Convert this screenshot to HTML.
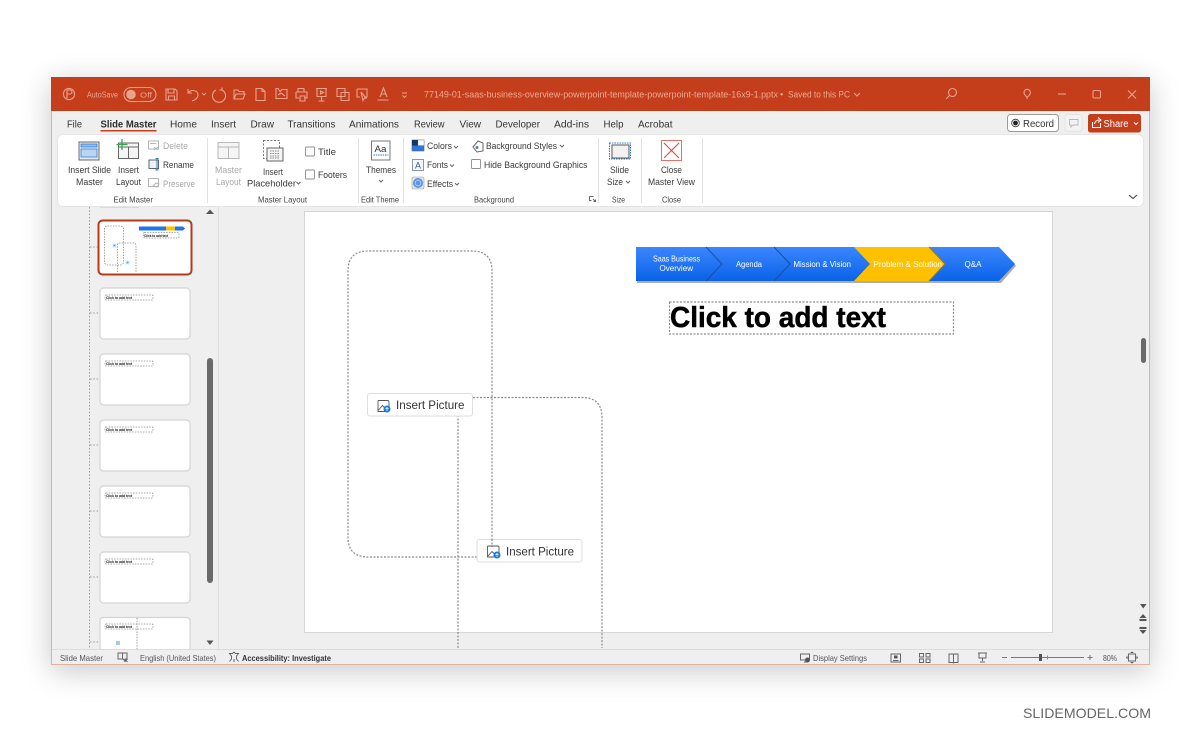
<!DOCTYPE html>
<html lang="en">
<head>
<meta charset="utf-8">
<title>Slide Master</title>
<style>
html,body{margin:0;padding:0;background:#fff;width:1200px;height:743px;overflow:hidden}
#win{position:absolute;left:51px;top:77px;width:1099px;height:588px;box-shadow:0 6px 28px rgba(0,0,0,.22)}
svg{position:absolute;left:0;top:0;filter:blur(.3px)}
text{font-family:"Liberation Sans",sans-serif;font-size:9.5px;fill:#3a3a3a}
.tab{font-size:10.5px;fill:#333}
.g{fill:#a8a8a8}
.grp{font-size:8.5px;fill:#444}
.nav{font-size:8px;fill:#fff}
.s{font-size:8.5px;fill:#555}
.ti{stroke:#eba28c;fill:none;stroke-width:1.1}
.ic{stroke:#666;fill:none;stroke-width:1}
.ig{stroke:#b5b5b5;fill:none;stroke-width:1}
.d{stroke:#8c8c8c;fill:none;stroke-width:1.2;stroke-dasharray:2 1.5}
.md{stroke:#8c8c8c;fill:none;stroke-width:.8;stroke-dasharray:1.5 1.2}
.th{fill:#fff;stroke:#d4d4d4;stroke-width:1.2}
.mt{font-size:3.6px;font-weight:bold;fill:#111}
.ck{fill:#fff;stroke:#8d8d8d;stroke-width:.9}
</style>
</head>
<body>
<div id="win"></div>
<svg width="1200" height="743" viewBox="0 0 1200 743" xmlns="http://www.w3.org/2000/svg">
<!-- window base -->
<rect x="51.5" y="77.5" width="1098" height="587" fill="#efefef" stroke="#e2b0a0"/>
<rect x="51" y="77" width="1099" height="34" fill="#c43e1c"/>

<!-- title bar icons -->
<circle cx="69" cy="94" r="5.6" class="ti" stroke-width="1.4"/><path d="M67 90v8M67 90h3a2 2 0 0 1 0 4h-3" class="ti"/>
<text x="87" y="97.5" style="font-size:8px;fill:#e9a591" textLength="31" lengthAdjust="spacingAndGlyphs">AutoSave</text>
<rect x="124" y="87.5" width="32" height="14" rx="7" fill="none" stroke="#eba28c" stroke-width="1.1"/>
<circle cx="131" cy="94.5" r="4.8" fill="#eba28c"/>
<text x="140" y="97.5" style="font-size:7.5px;fill:#e9a591" textLength="12" lengthAdjust="spacingAndGlyphs">Off</text>
<path d="M166 89h9l2 2v9h-11zM168 89v4h6v-4M168.500 100v-4h6v4" class="ti"/>
<path d="M188 89v4h4M188 93c3-4 10-3 10 2 0 3-3 5-6 6" class="ti"/>
<path d="M202 93l2 2 2-2" class="ti" stroke-width=".9"/>
<path d="M216 90a6.500 6.500 0 1 0 6 0M222 90v-2.500M222 90h-2.500" class="ti"/>
<path d="M234 99v-9h4l1 1.500h5v2M234 99l2-5h9l-2 5z" class="ti"/>
<path d="M256 88.500h6l3 3v9h-9zM262 88.500v3h3" class="ti"/>
<path d="M276 88.500v10h11v-9h-5l-2 2-2-3zM278 95l3-2 4 3" class="ti"/>
<path d="M298 92v-3.500h6V92M296 92h11v6h-3M296 92v6h3M300 96h5v5h-5z" class="ti"/>
<path d="M316 88.500h11M317 88.500v8h9v-8M321.500 96.500v4M318.500 101h6M320.500 91l3 1.500-3 1.500z" class="ti"/>
<path d="M337 88.500h8v8h-8z" class="ti" fill="#eba28c"/><rect x="341" y="92.500" width="8" height="8" fill="none" stroke="#eba28c"/>
<path d="M357 89h10v8h-3M357 89v8h3M361 92l5 6-2 .5-1 2z" class="ti"/>
<path d="M380 97l3.500-9 3.500 9M381.500 94h4M377.500 100h11" class="ti" stroke-width="1.200"/>
<path d="M402 93h5M402.500 95.500l2 2 2-2" class="ti" stroke-width=".8"/>

<text x="424" y="97.500" style="font-size:9px;fill:#eda994" textLength="354" lengthAdjust="spacingAndGlyphs">77149-01-saas-business-overview-powerpoint-template-powerpoint-template-16x9-1.pptx</text>
<text x="780" y="97.500" style="font-size:9px;fill:#eda994">•</text>
<text x="788" y="97.500" style="font-size:9px;fill:#eda994" textLength="62" lengthAdjust="spacingAndGlyphs">Saved to this PC</text>
<path d="M854 93l3 3 3-3" class="ti"/>
<circle cx="952.500" cy="92.500" r="4" class="ti"/><path d="M949.500 95.500l-3.500 3.500" class="ti"/>
<path d="M1027 99v-2c-1-1-3-2-3-4.500a3.200 3.200 0 0 1 6.400 0c0 2.500-2 3.500-3 4.500" class="ti"/>
<path d="M1058 94h8" class="ti"/>
<rect x="1093" y="90.500" width="7.500" height="7.500" rx="1.500" class="ti"/>
<path d="M1128 90.500l8 8M1136 90.500l-8 8" class="ti"/>

<!-- tabs -->
<text class="tab" x="67" y="127.500" textLength="15" lengthAdjust="spacingAndGlyphs">File</text>
<text class="tab" x="100.500" y="127.500" textLength="56" lengthAdjust="spacingAndGlyphs" style="font-weight:bold;font-size:10px;fill:#2c2c2c">Slide Master</text>
<rect x="100.500" y="130" width="56" height="1.500" fill="#c43e1c"/>
<text class="tab" x="170" y="127.500" textLength="27" lengthAdjust="spacingAndGlyphs">Home</text>
<text class="tab" x="211" y="127.500" textLength="25" lengthAdjust="spacingAndGlyphs">Insert</text>
<text class="tab" x="250.500" y="127.500" textLength="23.500" lengthAdjust="spacingAndGlyphs">Draw</text>
<text class="tab" x="287.500" y="127.500" textLength="48" lengthAdjust="spacingAndGlyphs">Transitions</text>
<text class="tab" x="349" y="127.500" textLength="50" lengthAdjust="spacingAndGlyphs">Animations</text>
<text class="tab" x="414" y="127.500" textLength="30.500" lengthAdjust="spacingAndGlyphs">Review</text>
<text class="tab" x="459.500" y="127.500" textLength="21.500" lengthAdjust="spacingAndGlyphs">View</text>
<text class="tab" x="495.500" y="127.500" textLength="44.500" lengthAdjust="spacingAndGlyphs">Developer</text>
<text class="tab" x="554" y="127.500" textLength="35" lengthAdjust="spacingAndGlyphs">Add-ins</text>
<text class="tab" x="603.500" y="127.500" textLength="20" lengthAdjust="spacingAndGlyphs">Help</text>
<text class="tab" x="638" y="127.500" textLength="34.500" lengthAdjust="spacingAndGlyphs">Acrobat</text>

<!-- record, comment, share -->
<rect x="1007.500" y="114.500" width="51" height="17" rx="3" fill="#fff" stroke="#9b9b9b"/>
<circle cx="1015.500" cy="123" r="3.800" fill="none" stroke="#333" stroke-width=".8"/><circle cx="1015.500" cy="123" r="2.400" fill="#222"/>
<text x="1023" y="126.800" style="font-size:10px;fill:#333" textLength="31" lengthAdjust="spacingAndGlyphs">Record</text>
<rect x="1065" y="114.500" width="17" height="17" rx="3" fill="#f3f3f3" stroke="#e4e4e4"/>
<path d="M1069.500 119.500h8.500v5.500h-5l-2 2v-2h-1.500z" fill="none" stroke="#b8b8b8" stroke-width=".9"/>
<rect x="1088" y="114" width="53" height="18.500" rx="2.500" fill="#c43e1c"/>
<path d="M1092.500 122v5.500h8V123M1094.500 124c.5-3 2.500-4 5-4M1098 117.500l3 2.500-3 2.500" fill="none" stroke="#fff" stroke-width="1"/>
<text x="1103.500" y="126.800" style="font-size:10px;fill:#fff" textLength="25" lengthAdjust="spacingAndGlyphs">Share</text>
<path d="M1134 122.500l2 2 2-2" fill="none" stroke="#fff" stroke-width="1"/>

<!-- left pane (under ribbon) -->
<rect x="52" y="207" width="166" height="443" fill="#efefef"/>
<rect x="100" y="206" width="39" height="2" fill="#dadada"/>

<!-- ribbon -->
<rect x="57.500" y="134.500" width="1086" height="72" rx="5" fill="#fff" stroke="#e6e6e6"/>
<g stroke="#e2e2e2" stroke-width="1">
<path d="M207.500 138v65M358.500 138v65M403.500 138v65M598.500 138v65M641.500 138v65M702.500 138v65"/>
</g>

<!-- insert slide master icon -->
<rect x="79" y="142" width="20" height="18" fill="#dfe9f4" stroke="#6d6d6d"/>
<rect x="81" y="144" width="16" height="3" fill="#8ebcec" stroke="#2a78d0" stroke-width=".7"/>
<rect x="81" y="149" width="16" height="8" fill="#b9d5f2" stroke="#2a78d0" stroke-width=".7"/>
<text x="68" y="173" textLength="43" lengthAdjust="spacingAndGlyphs">Insert Slide</text>
<text x="76" y="185" textLength="27" lengthAdjust="spacingAndGlyphs">Master</text>
<!-- insert layout icon -->
<rect x="118.500" y="143" width="20" height="15.500" fill="#f5f5f5" stroke="#666"/>
<path d="M118.500 147h20M128.500 147v11.500" stroke="#666" fill="none"/>
<path d="M122 139v11M116.500 144.500h11" stroke="#2fa84f" stroke-width="1.300" fill="none"/>
<text x="118" y="173" textLength="21" lengthAdjust="spacingAndGlyphs">Insert</text>
<text x="116" y="185" textLength="25" lengthAdjust="spacingAndGlyphs">Layout</text>
<!-- small col -->
<rect x="148.500" y="141" width="10" height="8" class="ig"/><path d="M150 143.500h6M154 147l4 3M158 147l-4 3" class="ig"/>
<text class="g" x="163" y="149" textLength="25" lengthAdjust="spacingAndGlyphs">Delete</text>
<rect x="149" y="160" width="9.500" height="8.500" fill="#eef3f8" stroke="#555" stroke-width=".9"/><path d="M157 158.500v11.500M155.500 158.500h3M155.500 170h3" stroke="#2a78d0" fill="none"/>
<text x="163" y="168" textLength="31" lengthAdjust="spacingAndGlyphs">Rename</text>
<rect x="148.500" y="178.500" width="10" height="8" class="ig"/><path d="M153 186l3-3 3 1-2 3z" class="ig"/>
<text class="g" x="163" y="187" textLength="32" lengthAdjust="spacingAndGlyphs">Preserve</text>
<text class="grp" x="113.500" y="202.500" textLength="39.500" lengthAdjust="spacingAndGlyphs">Edit Master</text>

<!-- master layout -->
<rect x="218" y="142.500" width="21" height="16" fill="#f5f5f5" stroke="#b8b8b8"/><path d="M218 147h21M228.500 147v11.500" stroke="#b8b8b8" fill="none"/>
<text class="g" x="215" y="173" textLength="27" lengthAdjust="spacingAndGlyphs">Master</text>
<text class="g" x="216" y="185" textLength="25" lengthAdjust="spacingAndGlyphs">Layout</text>
<rect x="263.500" y="140.500" width="16" height="18" fill="none" stroke="#777" stroke-dasharray="2 1.500"/>
<rect x="267" y="148" width="16" height="13" fill="#f4f4f4" stroke="#666"/>
<path d="M270 151h10M270 153.500h10M270 156h10M270 158h10" stroke="#888" stroke-dasharray="1.500 1" fill="none"/>
<text x="263" y="175" textLength="20" lengthAdjust="spacingAndGlyphs">Insert</text>
<text x="247" y="186.500" textLength="49" lengthAdjust="spacingAndGlyphs">Placeholder</text>
<path d="M295 182l2 2 2-2" class="ic" transform="translate(1.500)"/>
<rect class="ck" x="305.500" y="147" width="9" height="9" rx="1"/>
<text x="318" y="155" textLength="18" lengthAdjust="spacingAndGlyphs">Title</text>
<rect class="ck" x="305.500" y="170" width="9" height="9" rx="1"/>
<text x="318" y="178" textLength="29" lengthAdjust="spacingAndGlyphs">Footers</text>
<text class="grp" x="258" y="202.500" textLength="49" lengthAdjust="spacingAndGlyphs">Master Layout</text>

<!-- themes -->
<rect x="371.500" y="141" width="18.500" height="19" fill="#fff" stroke="#777"/>
<text x="374.500" y="152" style="font-size:9px;fill:#333" textLength="12" lengthAdjust="spacingAndGlyphs">Aa</text>
<path d="M373.500 155h15" stroke="#2a78d0" stroke-dasharray="1.500 .8" fill="none"/>
<text x="366" y="173" textLength="30" lengthAdjust="spacingAndGlyphs">Themes</text>
<path d="M379 180l2 2 2-2" class="ic"/>
<text class="grp" x="361" y="202.500" textLength="38" lengthAdjust="spacingAndGlyphs">Edit Theme</text>

<!-- background -->
<rect x="412" y="140" width="12" height="11" fill="#2a78e0" stroke="#666" stroke-width=".6"/><rect x="412" y="140" width="6" height="5.500" fill="#12365f"/><rect x="418" y="140" width="6" height="5.500" fill="#fff" stroke="#888" stroke-width=".4"/>
<text x="427" y="149" textLength="25" lengthAdjust="spacingAndGlyphs">Colors</text>
<path d="M454 146l2 2 2-2" class="ic" stroke-width=".9"/>
<rect x="412.500" y="159.500" width="11" height="11" fill="#f7f7f7" stroke="#8a97a8"/>
<text x="415" y="168.500" style="font-size:9px;fill:#2a5a9c">A</text>
<text x="427" y="168" textLength="21" lengthAdjust="spacingAndGlyphs">Fonts</text>
<path d="M450 164.500l2 2 2-2" class="ic" stroke-width=".9"/>
<rect x="412" y="177" width="12" height="12" rx="1.500" fill="#e4e4e4" stroke="#a0a0a0" stroke-width=".6"/><circle cx="418" cy="183" r="5" fill="#5a96e6"/><circle cx="418" cy="183" r="2.800" fill="none" stroke="#bcd6f5" stroke-width=".8"/>
<text x="427" y="187" textLength="26" lengthAdjust="spacingAndGlyphs">Effects</text>
<path d="M455 183l2 2 2-2" class="ic" stroke-width=".9"/>
<path d="M473 147l5-6 5 2v8l-6 1z" class="ic" stroke-width=".9"/><circle cx="477" cy="147.500" r="1.500" fill="#4a80c8"/>
<text x="486" y="149" textLength="71" lengthAdjust="spacingAndGlyphs">Background Styles</text>
<path d="M560 145l2 2 2-2" class="ic" stroke-width=".9"/>
<rect class="ck" x="471.500" y="159.500" width="9" height="9" rx="1"/>
<text x="484" y="168" textLength="103.500" lengthAdjust="spacingAndGlyphs">Hide Background Graphics</text>
<text class="grp" x="474" y="202.500" textLength="40" lengthAdjust="spacingAndGlyphs">Background</text>
<path d="M589.500 196.500h4M589.500 196.500v4h2M593 199l2.500 2.500M595.500 199.500v2h-2" class="ic" stroke-width=".8"/>

<!-- size -->
<rect x="609.500" y="143" width="21" height="16" fill="none" stroke="#2a78d0" stroke-dasharray="1.500 1"/>
<rect x="612" y="145" width="17" height="13" fill="#f2f2f2" stroke="#555"/>
<text x="610" y="173" textLength="19" lengthAdjust="spacingAndGlyphs">Slide</text>
<text x="607" y="185" textLength="16" lengthAdjust="spacingAndGlyphs">Size</text>
<path d="M626 181l2 2 2-2" class="ic"/>
<text class="grp" x="612" y="202.500" textLength="13" lengthAdjust="spacingAndGlyphs">Size</text>

<!-- close -->
<rect x="661.500" y="140.500" width="20" height="20" fill="#fff" stroke="#e8706a"/>
<path d="M664 143l15 15M679 143l-15 15" stroke="#e2403a" stroke-width="1" fill="none"/>
<text x="661" y="173" textLength="21" lengthAdjust="spacingAndGlyphs">Close</text>
<text x="648" y="185" textLength="47" lengthAdjust="spacingAndGlyphs">Master View</text>
<text class="grp" x="662" y="202.500" textLength="19" lengthAdjust="spacingAndGlyphs">Close</text>
<path d="M1129 195l4 3.500 4-3.500" fill="none" stroke="#444" stroke-width="1.100"/>

<!-- left pane details -->
<path d="M218.500 207v443" stroke="#dcdcdc"/>
<path d="M89.500 207v443" stroke="#9a9a9a" stroke-dasharray="1.500 1.800" fill="none"/>
<g stroke="#9a9a9a" stroke-dasharray="1.500 1.800" fill="none">
<path d="M90 247h8M90 313h8M90 379h8M90 445h8M90 511h8M90 577h8M90 642h8"/>
</g>
<path d="M210 209.500l4 4.500h-8z" fill="#555"/>
<path d="M206.500 640.500h7l-3.500 4.500z" fill="#555"/>
<rect x="207" y="358" width="6" height="225" rx="3" fill="#6a6a6a"/>

<!-- selected thumb -->
<rect x="98.500" y="220.500" width="93" height="54" rx="4" fill="#fff" stroke="#b5391b" stroke-width="2"/>
<rect x="104.500" y="226" width="19" height="39" rx="3" class="md"/>
<path d="M117.500 272v-27q0-2 2-2h14q2 0 2.500 2v27" class="md"/>
<rect x="112" y="243" width="5" height="5" fill="#eef3f8"/><rect x="113.500" y="244.500" width="2" height="2" fill="#5aa0e8"/>
<rect x="125" y="260" width="5" height="5" fill="#eef3f8"/><rect x="126.500" y="261.500" width="2" height="2" fill="#5aa0e8"/>
<path d="M139 226.500h44l2 2-2 2h-44z" fill="#1f74f0"/><rect x="166" y="226.500" width="9" height="4" fill="#ffc000"/>
<rect x="143.500" y="232.500" width="35.500" height="5.500" rx="1" class="md"/>
<text class="mt" x="144" y="237" textLength="24" lengthAdjust="spacingAndGlyphs">Click to add text</text>

<!-- other thumbs -->
<rect class="th" x="100" y="288" width="90" height="51" rx="3.500"/>
<rect class="md" x="105" y="295" width="48" height="5" rx="1"/>
<text class="mt" x="106" y="299" textLength="26" lengthAdjust="spacingAndGlyphs">Click to add text</text>
<rect class="th" x="100" y="354" width="90" height="51" rx="3.500"/>
<rect class="md" x="105" y="361" width="48" height="5" rx="1"/>
<text class="mt" x="106" y="365" textLength="26" lengthAdjust="spacingAndGlyphs">Click to add text</text>
<rect class="th" x="100" y="420" width="90" height="51" rx="3.500"/>
<rect class="md" x="105" y="427" width="48" height="5" rx="1"/>
<text class="mt" x="106" y="431" textLength="26" lengthAdjust="spacingAndGlyphs">Click to add text</text>
<rect class="th" x="100" y="486" width="90" height="51" rx="3.500"/>
<rect class="md" x="105" y="493" width="48" height="5" rx="1"/>
<text class="mt" x="106" y="497" textLength="26" lengthAdjust="spacingAndGlyphs">Click to add text</text>
<rect class="th" x="100" y="552" width="90" height="51" rx="3.500"/>
<rect class="md" x="105" y="559" width="48" height="5" rx="1"/>
<text class="mt" x="106" y="563" textLength="26" lengthAdjust="spacingAndGlyphs">Click to add text</text>
<path d="M100 650v-29q0-3.500 3.500-3.500h83q3.500 0 3.500 3.500v29z" class="th"/>
<rect class="md" x="105" y="624" width="48" height="5" rx="1"/>
<text class="mt" x="106" y="628" textLength="26" lengthAdjust="spacingAndGlyphs">Click to add text</text>
<path d="M137 618v32" class="md"/>
<rect x="116" y="641" width="4" height="4" fill="#a9c9ec"/>

<!-- slide canvas -->
<rect x="304.500" y="211.500" width="748" height="421" fill="#fff" stroke="#d6d6d6"/>

<!-- dashed picture placeholders -->
<path d="M477 557H368q-20 0-20-20V271q0-20 20-20h104q20 0 20 20v268" class="d"/>
<path d="M458 648V416M473 397.500h109q20 0 20 20V648" class="d"/>

<!-- insert picture buttons -->
<rect x="367.500" y="393.500" width="105" height="22.500" rx="2.500" fill="#fff" stroke="#dedede"/>
<path d="M378 400.500h9.500q1.500 0 1.500 1.500v8q0 1.500-1.500 1.500H378V400.500M378.500 410l4-4.500 3 3" fill="none" stroke="#555" stroke-width=".9"/>
<circle cx="387" cy="409" r="3.500" fill="#1a7ce0"/><path d="M387 411v-3.500M385.500 409l1.500-1.500 1.500 1.500" stroke="#fff" stroke-width=".7" fill="none"/>
<text x="396" y="409" style="font-size:11.500px;fill:#333" textLength="68.500" lengthAdjust="spacingAndGlyphs">Insert Picture</text>

<rect x="477" y="539.500" width="105" height="22.500" rx="2.500" fill="#fff" stroke="#dedede"/>
<path d="M492 539v8" class="d"/>
<path d="M487.500 546h10q1.500 0 1.500 1.500v8q0 1.500-1.500 1.500h-10V546M488 556l4-4.500 3 3" fill="none" stroke="#555" stroke-width=".9"/>
<circle cx="497" cy="555" r="3.500" fill="#1a7ce0"/><path d="M497 557v-3.500M495.500 555l1.500-1.500 1.500 1.500" stroke="#fff" stroke-width=".7" fill="none"/>
<text x="506" y="555.500" style="font-size:11.500px;fill:#333" textLength="68" lengthAdjust="spacingAndGlyphs">Insert Picture</text>

<!-- nav chevrons -->
<defs>
<linearGradient id="b" x1="0" y1="0" x2="0" y2="1"><stop offset="0" stop-color="#3a86ff"/><stop offset="1" stop-color="#0a62e6"/></linearGradient>
</defs>
<path d="M637 249H1001L1016 266L1001 283H637Z" fill="#6a6a6a" opacity=".55"/>
<path d="M636 247H999L1015 264L999 281H636Z" fill="url(#b)"/>
<path d="M706 247L722 264L706 281" fill="none" stroke="#1450a8" stroke-width="1"/>
<path d="M774 247L790 264L774 281" fill="none" stroke="#1450a8" stroke-width="1"/>
<path d="M854 247H929L945 264L929 281H854L870 264Z" fill="#ffc000"/>
<path d="M929 247L945 264L929 281" fill="none" stroke="#9a7a10" stroke-width="1"/>
<text class="nav" x="653" y="261.500" textLength="47" lengthAdjust="spacingAndGlyphs">Saas Business</text>
<text class="nav" x="659.500" y="271" textLength="33.500" lengthAdjust="spacingAndGlyphs">Overview</text>
<text class="nav" x="736" y="267" textLength="26" lengthAdjust="spacingAndGlyphs">Agenda</text>
<text class="nav" x="793.500" y="267" textLength="57.500" lengthAdjust="spacingAndGlyphs">Mission &amp; Vision</text>
<text class="nav" x="873.500" y="267" textLength="68.500" lengthAdjust="spacingAndGlyphs">Problem &amp; Solution</text>
<text class="nav" x="964.500" y="267" textLength="17" lengthAdjust="spacingAndGlyphs">Q&amp;A</text>

<!-- click to add text -->
<rect x="669.500" y="302" width="284" height="32" class="d"/>
<text x="670" y="327" style="font-size:29px;font-weight:bold;fill:#000;stroke:#000;stroke-width:.5" textLength="216" lengthAdjust="spacingAndGlyphs">Click to add text</text>

<!-- right scroll -->
<rect x="1141" y="338" width="5" height="25" rx="2.500" fill="#6a6a6a"/>
<path d="M1140 604h6.500l-3.250 4.500z" fill="#555"/>
<path d="M1143 614l3.500 4h-7zM1139.500 619h7v2h-7z" fill="#555"/>
<path d="M1139.500 627h7v2h-7zM1139.500 630h7l-3.500 4z" fill="#555"/>

<!-- status bar -->
<rect x="52" y="650" width="1097" height="14" fill="#efefef"/>
<path d="M52 649.500h1097" stroke="#dcdcdc"/>
<text class="s" x="60" y="661" textLength="43" lengthAdjust="spacingAndGlyphs">Slide Master</text>
<path d="M118 653h9v6l-2 0v2l-2-2h-5zM122.500 653v6" class="ic"/><path d="M124.500 659l3 3M127.500 659l-3 3" class="ic" stroke-width=".8"/>
<text class="s" x="140" y="661" textLength="76" lengthAdjust="spacingAndGlyphs">English (United States)</text>
<path d="M234 652l1.500 1.500h3l-2 2.500v3l2 2.500M234 652l-1.500 1.500h-3l2 2.500v3l-2 2.500M234 659v3" class="ic" stroke-width=".9"/>
<text x="242" y="661" style="font-size:8.500px;font-weight:bold;fill:#333" textLength="89" lengthAdjust="spacingAndGlyphs">Accessibility: Investigate</text>
<rect x="800.500" y="654" width="9" height="6" class="ic"/><path d="M804 662h3" class="ic"/><circle cx="807.500" cy="660" r="2.500" fill="#555"/>
<text class="s" x="813" y="661" textLength="54" lengthAdjust="spacingAndGlyphs">Display Settings</text>
<rect x="891" y="654" width="9.500" height="8" class="ic" stroke="#555"/><rect x="894" y="655.500" width="3.500" height="3" fill="#555"/><path d="M893 660.500h5.500" class="ic"/>
<g class="ic" stroke="#555"><rect x="919.500" y="653.500" width="4" height="3.500"/><rect x="926" y="653.500" width="4" height="3.500"/><rect x="919.500" y="659" width="4" height="3.500"/><rect x="926" y="659" width="4" height="3.500"/></g>
<path d="M949 654h4l.5 1 .5-1h4v8.500h-4l-.5.5-.5-.5h-4zM953.500 655v8" class="ic"/>
<path d="M978 653h9M979 653v5h7v-5M982.500 658v3M980 662h5" class="ic"/>
<path d="M1002 657.500h5M1011 657.500h73M1087.500 657.500h5M1090 655v5" stroke="#777" fill="none"/>
<rect x="1039" y="654" width="3" height="7" fill="#555"/>
<path d="M1047.500 655.500v4" stroke="#888"/>
<text class="s" x="1103" y="661" textLength="14" lengthAdjust="spacingAndGlyphs">80%</text>
<rect x="1128.500" y="654" width="7" height="7" class="ic"/><path d="M1132 651.500l-2 1.500h4zM1132 663.500l-2-1.500h4zM1126 657.500l1.500-2v4zM1138 657.500l-1.500-2v4z" fill="#555"/>

<!-- watermark -->
<text x="1023" y="718" style="font-size:14px;fill:#666" textLength="128" lengthAdjust="spacingAndGlyphs">SLIDEMODEL.COM</text>
</svg>
</body>
</html>
